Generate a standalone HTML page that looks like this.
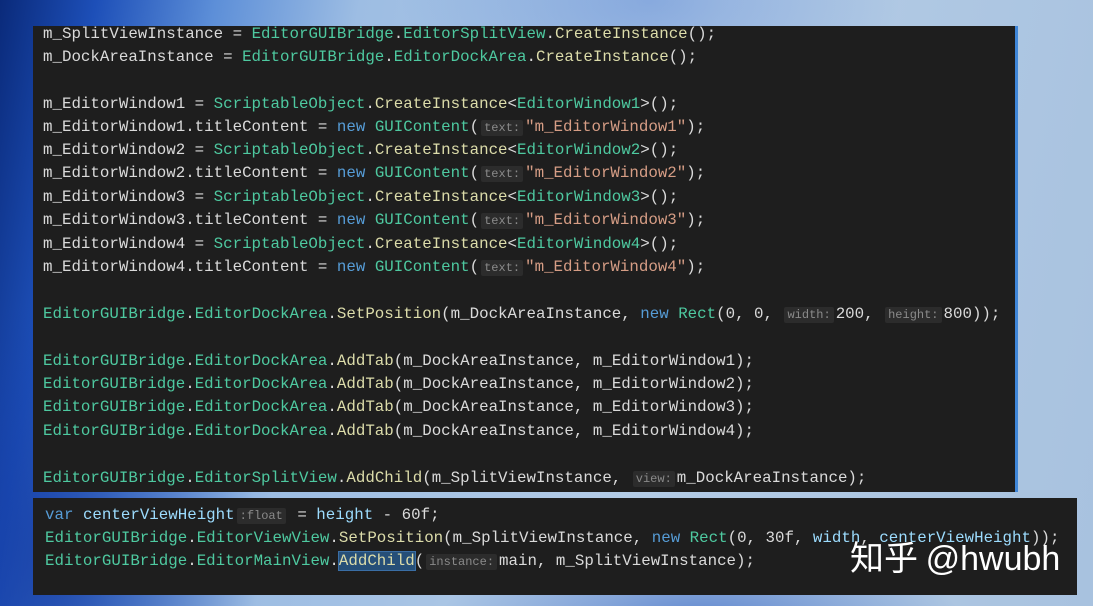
<!DOCTYPE html>
<html><head><meta charset="utf-8"><style>
html,body{margin:0;padding:0;width:1093px;height:606px;overflow:hidden}
body{position:relative;
background:
radial-gradient(ellipse 250px 130px at 650px 0px,rgba(61,111,208,.35),rgba(61,111,208,0) 100%),
radial-gradient(ellipse 260px 80px at 700px 620px,rgba(42,91,192,.6),rgba(42,91,192,0) 100%),
radial-gradient(ellipse 200px 260px at 60px 560px,rgba(18,56,160,.7),rgba(18,56,160,0) 100%),
linear-gradient(100deg,#0a2a7a 0%,#1d4fb8 8%,#5d8fd8 18%,#9dbde3 30%,#b4cce6 60%,#a8c2df 100%);}
.p{position:absolute;background:#1e1e1e;font-family:"Liberation Mono",monospace;font-size:15.8px;color:#dadada;white-space:pre;overflow:hidden}
.l{position:absolute;left:10px;height:23px;line-height:23px}
.g{color:#4ec9a0}.y{color:#dcdcaa}.k{color:#569cd6}.s{color:#d69d85}.v{color:#9cdcfe}
.h{font-size:12px;color:#8a8a8a;background:#2c2c2c;padding:1px 3px;margin:0 2px;border-radius:2px}
.sel{background:#264f78;outline:1px solid #3a6ea5}
</style></head><body>

<div class="p" style="left:33px;top:26px;width:982px;height:466px">
<div class="l" style="top:-3px">m_SplitViewInstance = <span class="g">EditorGUIBridge</span>.<span class="g">EditorSplitView</span>.<span class="y">CreateInstance</span>();</div>
<div class="l" style="top:20px">m_DockAreaInstance = <span class="g">EditorGUIBridge</span>.<span class="g">EditorDockArea</span>.<span class="y">CreateInstance</span>();</div>
<div class="l" style="top:67px">m_EditorWindow1 = <span class="g">ScriptableObject</span>.<span class="y">CreateInstance</span>&lt;<span class="g">EditorWindow1</span>&gt;();</div>
<div class="l" style="top:90px">m_EditorWindow1.titleContent = <span class="k">new</span> <span class="g">GUIContent</span>(<span class="h">text:</span><span class="s">"m_EditorWindow1"</span>);</div>
<div class="l" style="top:113px">m_EditorWindow2 = <span class="g">ScriptableObject</span>.<span class="y">CreateInstance</span>&lt;<span class="g">EditorWindow2</span>&gt;();</div>
<div class="l" style="top:136px">m_EditorWindow2.titleContent = <span class="k">new</span> <span class="g">GUIContent</span>(<span class="h">text:</span><span class="s">"m_EditorWindow2"</span>);</div>
<div class="l" style="top:160px">m_EditorWindow3 = <span class="g">ScriptableObject</span>.<span class="y">CreateInstance</span>&lt;<span class="g">EditorWindow3</span>&gt;();</div>
<div class="l" style="top:183px">m_EditorWindow3.titleContent = <span class="k">new</span> <span class="g">GUIContent</span>(<span class="h">text:</span><span class="s">"m_EditorWindow3"</span>);</div>
<div class="l" style="top:207px">m_EditorWindow4 = <span class="g">ScriptableObject</span>.<span class="y">CreateInstance</span>&lt;<span class="g">EditorWindow4</span>&gt;();</div>
<div class="l" style="top:230px">m_EditorWindow4.titleContent = <span class="k">new</span> <span class="g">GUIContent</span>(<span class="h">text:</span><span class="s">"m_EditorWindow4"</span>);</div>
<div class="l" style="top:277px"><span class="g">EditorGUIBridge</span>.<span class="g">EditorDockArea</span>.<span class="y">SetPosition</span>(m_DockAreaInstance, <span class="k">new</span> <span class="g">Rect</span>(0, 0, <span class="h">width:</span>200, <span class="h">height:</span>800));</div>
<div class="l" style="top:324px"><span class="g">EditorGUIBridge</span>.<span class="g">EditorDockArea</span>.<span class="y">AddTab</span>(m_DockAreaInstance, m_EditorWindow1);</div>
<div class="l" style="top:347px"><span class="g">EditorGUIBridge</span>.<span class="g">EditorDockArea</span>.<span class="y">AddTab</span>(m_DockAreaInstance, m_EditorWindow2);</div>
<div class="l" style="top:370px"><span class="g">EditorGUIBridge</span>.<span class="g">EditorDockArea</span>.<span class="y">AddTab</span>(m_DockAreaInstance, m_EditorWindow3);</div>
<div class="l" style="top:394px"><span class="g">EditorGUIBridge</span>.<span class="g">EditorDockArea</span>.<span class="y">AddTab</span>(m_DockAreaInstance, m_EditorWindow4);</div>
<div class="l" style="top:441px"><span class="g">EditorGUIBridge</span>.<span class="g">EditorSplitView</span>.<span class="y">AddChild</span>(m_SplitViewInstance, <span class="h">view:</span>m_DockAreaInstance);</div>
</div>
<div style="position:absolute;left:1015px;top:26px;width:3px;height:466px;background:#3f86d8"></div>

<div class="p" style="left:33px;top:498px;width:1044px;height:97px">
<div class="l" style="top:6px;left:12px"><span class="k">var</span> <span class="v">centerViewHeight</span><span class="h">:float</span> = <span class="v">height</span> - 60f;</div>
<div class="l" style="top:29px;left:12px"><span class="g">EditorGUIBridge</span>.<span class="g">EditorViewView</span>.<span class="y">SetPosition</span>(m_SplitViewInstance, <span class="k">new</span> <span class="g">Rect</span>(0, 30f, <span class="v">width</span>, <span class="v">centerViewHeight</span>));</div>
<div class="l" style="top:52px;left:12px"><span class="g">EditorGUIBridge</span>.<span class="g">EditorMainView</span>.<span class="y sel">AddChild</span>(<span class="h">instance:</span>main, m_SplitViewInstance);</div>
<div style="position:absolute;left:817px;top:36px;font-family:'Noto Sans CJK SC','Liberation Sans',sans-serif;font-size:34px;color:#fff;line-height:44px">知乎 <span style="font-family:'Liberation Sans',sans-serif">@hwubh</span></div>
</div>
</body></html>
